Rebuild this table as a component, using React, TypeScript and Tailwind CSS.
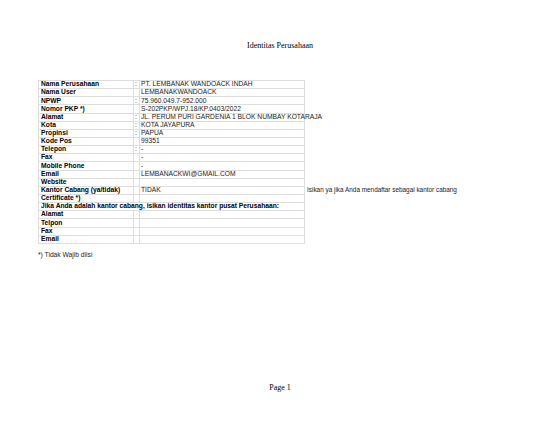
import React from "react";

type Row = { label: string; colon?: boolean; value?: string; note?: string; span?: boolean };

const rows: Row[] = [
  { label: "Nama Perusahaan", colon: true, value: "PT. LEMBANAK WANDOACK INDAH" },
  { label: "Nama User", value: "LEMBANAKWANDOACK" },
  { label: "NPWP", colon: true, value: "75.960.049.7-952.000" },
  { label: "Nomor PKP *)", value: "S-202PKP/WPJ.18/KP.0403/2022" },
  { label: "Alamat", colon: true, value: "JL. PERUM PURI GARDENIA 1 BLOK NUMBAY KOTARAJA" },
  { label: "Kota", colon: true, value: "KOTA JAYAPURA" },
  { label: "Propinsi", colon: true, value: "PAPUA" },
  { label: "Kode Pos", value: "99351" },
  { label: "Telepon", colon: true, value: "-" },
  { label: "Fax", value: "-" },
  { label: "Mobile Phone", value: "-" },
  { label: "Email", value: "LEMBANACKWI@GMAIL.COM" },
  { label: "Website", value: "" },
  { label: "Kantor Cabang (ya/tidak)", value: "TIDAK", note: "Isikan ya jika Anda mendaftar sebagai kantor cabang" },
  { label: "Certificate *)", value: "" },
  { label: "Jika Anda adalah kantor cabang, isikan identitas kantor pusat Perusahaan:", span: true },
  { label: "Alamat", value: "" },
  { label: "Telpon", value: "" },
  { label: "Fax", value: "" },
  { label: "Email", value: "" },
];

export default function App() {
  return (
    <div className="w-[560px] h-[433px] bg-white relative flex flex-col" style={{ fontFamily: '"Liberation Sans", Arial, sans-serif' }}>
      <div className="pt-[41px] text-center text-[8px] text-black leading-[10px]" style={{ fontFamily: '"Liberation Serif", "Times New Roman", serif' }}>
        Identitas Perusahaan
      </div>
      <div className="mt-[29px] ml-[38px] flex flex-col border-t border-l border-[#dedede] w-[267px]">
        {rows.map((r, i) =>
          r.span ? (
            <div key={i} className="h-[8.15px] flex items-center border-b border-r border-[#dedede] text-[6.7px] font-bold text-black whitespace-nowrap pl-[2px] leading-none">
              {r.label}
            </div>
          ) : (
            <div key={i} className="h-[8.15px] grid grid-cols-[95px_6px_165px] border-b border-[#dedede] relative">
              <div className="border-r border-[#dedede] flex items-center pl-[2px] text-[6.7px] font-bold text-black whitespace-nowrap leading-none">{r.label}</div>
              <div className="border-r border-[#dedede] flex items-center pl-[1px] text-[6.7px] text-[#222] leading-none">{r.colon ? ":" : ""}</div>
              <div className="border-r border-[#dedede] flex items-center pl-[1px] text-[6.7px] text-[#222] whitespace-nowrap leading-none">{r.value}</div>
              {r.note && (
                <div className="absolute left-[268px] top-0 h-full flex items-center text-[6.4px] text-[#222] whitespace-nowrap leading-none">{r.note}</div>
              )}
            </div>
          )
        )}
      </div>
      <div className="mt-[8px] ml-[38px] text-[6.7px] text-[#222] leading-none">*) Tidak Wajib diisi</div>
      <div className="mt-[124px] text-center text-[8px] text-black leading-[10px]" style={{ fontFamily: '"Liberation Serif", "Times New Roman", serif' }}>
        Page 1
      </div>
    </div>
  );
}
